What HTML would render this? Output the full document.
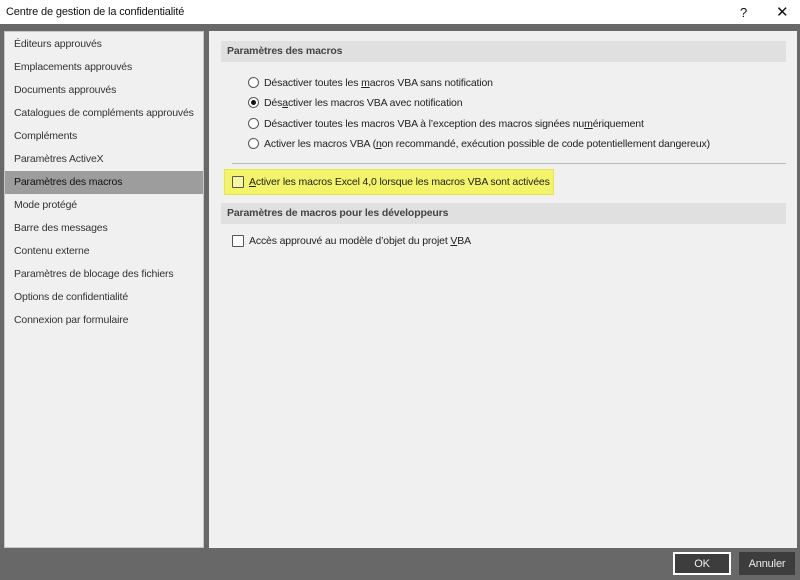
<!DOCTYPE html>
<html><head><meta charset="utf-8"><style>
*{margin:0;padding:0;box-sizing:border-box}
body{width:800px;height:580px;background:#686868;font-family:"Liberation Sans",sans-serif;font-size:10.5px;letter-spacing:-0.15px;color:#222;position:relative;overflow:hidden}
.abs{position:absolute;white-space:nowrap}
.title{left:0;top:0;width:800px;height:24px;background:#fff;font-size:11px;color:#111}
.left{left:4px;top:31px;width:200px;height:517px;background:#f0f0f0;border:1px solid #c8c8c8}
.right{left:209px;top:31px;width:588px;height:517px;background:#f0f0f0}
.item{position:absolute;left:0;width:198px;height:23px;line-height:23px;padding-left:9px;color:#333;white-space:nowrap}
.sel{background:#9d9d9d;color:#111}
.hdr{background:#e0e0e0;font-weight:bold;color:#444;padding-left:6px;line-height:21px;height:21px}
.radio{width:11px;height:11px;border:1px solid #555;border-radius:50%;background:#fff}
.cb{width:12px;height:12px;border:1px solid #555;background:#fff;border-radius:1px}
.btn{top:552px;height:23px;background:#3d3d3d;color:#eee;text-align:center;line-height:24px;font-size:11px}
</style></head><body>
<div class="abs title"><span class="abs" style="left:6px;top:6px">Centre de gestion de la confidentialité</span><span class="abs" style="left:740px;top:5px;font-size:13px">?</span><span class="abs" style="left:776px;top:3px;font-size:15px">✕</span></div>
<div class="abs left">
<div class="item" style="top:1px">Éditeurs approuvés</div>
<div class="item" style="top:24px">Emplacements approuvés</div>
<div class="item" style="top:47px">Documents approuvés</div>
<div class="item" style="top:70px">Catalogues de compléments approuvés</div>
<div class="item" style="top:93px">Compléments</div>
<div class="item" style="top:116px">Paramètres ActiveX</div>
<div class="item sel" style="top:139px">Paramètres des macros</div>
<div class="item" style="top:162px">Mode protégé</div>
<div class="item" style="top:185px">Barre des messages</div>
<div class="item" style="top:208px">Contenu externe</div>
<div class="item" style="top:231px">Paramètres de blocage des fichiers</div>
<div class="item" style="top:254px">Options de confidentialité</div>
<div class="item" style="top:277px">Connexion par formulaire</div>
</div>
<div class="abs right"></div>
<div class="abs hdr" style="left:221px;top:41px;width:565px">Paramètres des macros</div>
<div class="abs radio" style="left:248px;top:77px"></div><span class="abs" style="left:264px;top:77px">Désactiver toutes les <u>m</u>acros VBA sans notification</span>
<div class="abs radio" style="left:248px;top:97px"><div style="width:5px;height:5px;background:#111;border-radius:50%;margin:2px"></div></div><span class="abs" style="left:264px;top:97px">Dés<u>a</u>ctiver les macros VBA avec notification</span>
<div class="abs radio" style="left:248px;top:118px"></div><span class="abs" style="left:264px;top:118px">Désactiver toutes les macros VBA à l’exception des macros signées nu<u>m</u>ériquement</span>
<div class="abs radio" style="left:248px;top:138px"></div><span class="abs" style="left:264px;top:138px">Activer les macros VBA (<u>n</u>on recommandé, exécution possible de code potentiellement dangereux)</span>
<div class="abs" style="left:232px;top:163px;width:554px;height:1px;background:#bbb"></div>
<div class="abs" style="left:224px;top:169px;width:330px;height:26px;background:#f4f46a;border:1px solid #e6e64a"></div>
<div class="abs cb" style="left:232px;top:176px;background:#f6f6a0"></div><span class="abs" style="left:249px;top:176px"><u>A</u>ctiver les macros Excel 4,0 lorsque les macros VBA sont activées</span>
<div class="abs hdr" style="left:221px;top:203px;width:565px">Paramètres de macros pour les développeurs</div>
<div class="abs cb" style="left:232px;top:235px"></div><span class="abs" style="left:249px;top:235px">Accès approuvé au modèle d’objet du projet <u>V</u>BA</span>
<div class="abs btn" style="left:673px;width:58px;border:2px solid #fff;line-height:20px">OK</div>
<div class="abs btn" style="left:739px;width:56px">Annuler</div>
</body></html>
